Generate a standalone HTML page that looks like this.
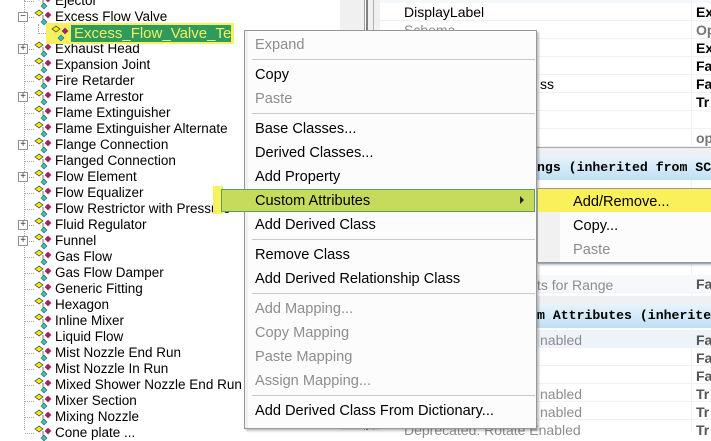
<!DOCTYPE html>
<html><head><meta charset="utf-8"><style>
*{margin:0;padding:0;box-sizing:border-box}
body{width:711px;height:430px;overflow:hidden;position:relative;background:#fff;font-family:"Liberation Sans",sans-serif;font-size:13.5px;color:#000}
.a{position:absolute;white-space:nowrap}
.ti{position:absolute;left:55px;height:16px;line-height:16px;white-space:nowrap}
.ic{position:absolute;left:33px;width:20px;height:16px}
.pb{position:absolute;left:18px;width:10px;height:10px;border:1px solid #919191;background:#fff;font-size:10px;line-height:8px;text-align:center;color:#333}
.mi{position:absolute;left:255px;font-size:14.6px;line-height:18px;white-space:nowrap;margin-top:1px}
.dis{color:#8d8d8d}
.sep{position:absolute;left:252px;width:283px;height:1px;background:#c8c8c8}
.row{position:absolute;left:380px;width:331px;height:18px;border-bottom:1px solid #eef2f8}
.val{position:absolute;left:696px;font-weight:bold;font-size:14px;line-height:18px}
.hdr{position:absolute;left:373px;width:338px;background:linear-gradient(#e8f3fb,#bfe0f5);font-family:"Liberation Mono",monospace;font-weight:bold;font-size:13.2px;white-space:nowrap;overflow:hidden}
</style></head><body>
<div class="a" style="left:24px;top:0;width:0;height:430px;border-left:1px dotted #a0a0a0"></div>
<div class="a" style="left:38px;top:24px;width:0;height:10px;border-left:1px dotted #a0a0a0"></div>
<div id="tree"></div>
<script>
var items=["Ejector","Excess Flow Valve","","Exhaust Head","Expansion Joint","Fire Retarder","Flame Arrestor","Flame Extinguisher","Flame Extinguisher Alternate","Flange Connection","Flanged Connection","Flow Element","Flow Equalizer","Flow Restrictor with Pressure","Fluid Regulator","Funnel","Gas Flow","Gas Flow Damper","Generic Fitting","Hexagon","Inline Mixer","Liquid Flow","Mist Nozzle End Run","Mist Nozzle In Run","Mixed Shower Nozzle End Run","Mixer Section","Mixing Nozzle","Cone plate ..."];
var plus={3:1,6:1,9:1,11:1,14:1,15:1};
var h="";
function icon(x,y){return '<svg class="ic" style="left:'+x+'px;top:'+y+'px" width="20" height="16" viewBox="0 0 20 16"><path d="M6 1l4 3-4 3-4-3z" fill="#f6f000" stroke="#555" stroke-width=".8"/><path d="M15 3l3 3-3 3-3-3z" fill="#c01070" stroke="#555" stroke-width=".6"/><path d="M11 10l3 3-3 3-3-3z" fill="#20c8c8" stroke="#555" stroke-width=".6"/><path d="M10 6v5" stroke="#555" stroke-width=".8"/></svg>';}
for(var i=0;i<items.length;i++){
 var y=-7+i*16;
 if(i==2){continue;}
 h+='<div class="a" style="left:25px;top:'+(y+8)+'px;width:9px;border-top:1px dotted #a0a0a0"></div>';
 h+=icon(33,y);
 h+='<div class="ti" style="top:'+y+'px">'+items[i]+'</div>';
 if(plus[i])h+='<div class="pb" style="top:'+(y+3)+'px">+</div>';
}
h+='<div class="pb" style="top:12px">&minus;</div>';
document.getElementById("tree").innerHTML=h;
</script>
<div class="a" style="left:340px;top:0;width:24px;height:430px;background:#f0f0f0"></div>
<div class="a" style="left:364px;top:0;width:1px;height:430px;background:#a0a0a0"></div>
<div class="a" style="left:366px;top:0;width:2px;height:430px;background:#808080"></div>
<div class="a" style="left:368px;top:0;width:12px;height:430px;background:#f0f0f0"></div>
<div class="a" style="left:373px;top:0;width:1px;height:430px;background:#b0b0b0"></div>
<div class="a" style="left:380px;top:0;width:331px;height:430px;background:#fff"></div>
<div class="a" style="left:380px;top:0;width:331px;height:3px;background:#f4f7fb"></div>
<div class="a" style="left:691px;top:0;width:1px;height:430px;background:#eef2f8"></div>
<div class="row" style="top:3px"></div><div class="a" style="left:404px;top:3px;font-size:14px;line-height:18px">DisplayLabel</div><div class="val" style="top:3px">Ex</div>
<div class="row" style="top:21px"></div><div class="a dis" style="left:404px;top:21px;font-size:14px;line-height:18px">Schema</div><div class="val" style="top:21px;color:#777">Op</div>
<div class="row" style="top:39px"></div><div class="val" style="top:39px">Ex</div>
<div class="row" style="top:57px"></div><div class="val" style="top:57px">Fa</div>
<div class="row" style="top:75px"></div><div class="a" style="left:540px;top:75px;font-size:14px;line-height:18px">ss</div><div class="val" style="top:75px">Fa</div>
<div class="row" style="top:93px"></div><div class="val" style="top:93px">Tr</div>
<div class="row" style="top:111px"></div>
<div class="row" style="top:129px"></div><div class="val" style="top:129px;color:#777">op</div>
<div class="a" style="left:380px;top:147px;width:331px;height:1px;background:#a8a8a8"></div>
<div class="a" style="left:380px;top:148px;width:331px;height:8px;background:#eef0f3"></div>
<div class="hdr" style="top:156px;height:24px;line-height:24px;padding-left:164px">ngs (inherited from SC</div>
<div class="hdr" style="top:238px;height:26px;line-height:26px;padding-left:164px">ment Custom Attribu</div>
<div class="row" style="top:275px;background:#f6f8fc"></div><div class="a dis" style="left:537px;top:275px;font-size:14px;line-height:20px">ts for Range</div><div class="val" style="top:275px;color:#555">Fa</div>
<div class="a" style="left:380px;top:296px;width:331px;height:8px;background:#eef0f3"></div>
<div class="hdr" style="top:304px;height:24px;line-height:24px;padding-left:164px">m Attributes (inherited</div>
<div class="row" style="top:330px;background:#eef3fa"></div><div class="a dis" style="left:540px;top:331px;font-size:14px;line-height:18px">nabled</div><div class="val" style="top:331px;color:#555">Fa</div>
<div class="row" style="top:348px"></div><div class="val" style="top:349px;color:#555">Fa</div>
<div class="row" style="top:366px"></div><div class="val" style="top:367px;color:#555">Fa</div>
<div class="row" style="top:384px"></div><div class="a dis" style="left:540px;top:385px;font-size:14px;line-height:18px">nabled</div><div class="val" style="top:385px;color:#555">Tr</div>
<div class="row" style="top:402px"></div><div class="a dis" style="left:540px;top:403px;font-size:14px;line-height:18px">nabled</div><div class="val" style="top:403px;color:#555">Tr</div>
<div class="a dis" style="left:404px;top:421px;font-size:14px;line-height:18px">Deprecated: Rotate Enabled</div><div class="val" style="top:421px;color:#555">Tr</div>

<div class="a" style="left:38px;top:33px;width:10px;border-top:1px dotted #a0a0a0"></div>
<div class="a" style="left:46px;top:23px;width:188px;height:21px;background:#f7f160"></div>
<svg class="a" style="left:50px;top:25px" width="20" height="16" viewBox="0 0 20 16"><path d="M6 1l4 3-4 3-4-3z" fill="#f6f000" stroke="#555" stroke-width=".8"/><path d="M15 3l3 3-3 3-3-3z" fill="#c01070" stroke="#555" stroke-width=".6"/><path d="M11 10l3 3-3 3-3-3z" fill="#20c8c8" stroke="#555" stroke-width=".6"/></svg>
<div class="a" style="left:71px;top:25px;width:160px;height:17px;background:#2e9a5e;color:#f4f060;font-size:15px;line-height:17px;padding-left:3px;overflow:hidden">Excess_Flow_Valve_Test</div>
<div class="a" style="left:213px;top:186px;width:10px;height:28px;background:#f7f160"></div>
<div class="a" style="left:244px;top:30px;width:293px;height:399px;background:#fcfcfc;border:1px solid #979797;box-shadow:2px 2px 2px rgba(0,0,0,.25)"></div>
<div class="a" style="left:245px;top:31px;width:3px;height:397px;background:#f1f1f1"></div>
<div class="mi dis" style="top:35px">Expand</div>
<div class="sep" style="top:59px"></div>
<div class="mi" style="top:65px">Copy</div>
<div class="mi dis" style="top:89px">Paste</div>
<div class="sep" style="top:113px"></div>
<div class="mi" style="top:119px">Base Classes...</div>
<div class="mi" style="top:143px">Derived Classes...</div>
<div class="mi" style="top:167px">Add Property</div>
<div class="a" style="left:221px;top:189px;width:314px;height:23px;background:#c6da5c;border:1px solid #5aa05a"></div>
<div class="mi" style="top:191px">Custom Attributes</div>
<div class="a" style="left:520px;top:196px;width:0;height:0;border-left:4px solid #222;border-top:4px solid transparent;border-bottom:4px solid transparent"></div>
<div class="mi" style="top:215px">Add Derived Class</div>
<div class="sep" style="top:239px"></div>
<div class="mi" style="top:245px">Remove Class</div>
<div class="mi" style="top:269px">Add Derived Relationship Class</div>
<div class="sep" style="top:293px"></div>
<div class="mi dis" style="top:299px">Add Mapping...</div>
<div class="mi dis" style="top:323px">Copy Mapping</div>
<div class="mi dis" style="top:347px">Paste Mapping</div>
<div class="mi dis" style="top:371px">Assign Mapping...</div>
<div class="sep" style="top:395px"></div>
<div class="mi" style="top:401px">Add Derived Class From Dictionary...</div>
<div class="a" style="left:537px;top:188px;width:174px;height:75px;background:#fcfcfc;border:1px solid #979797;border-right:none;box-shadow:2px 2px 2px rgba(0,0,0,.25)"></div>
<div class="a" style="left:538px;top:189px;width:22px;height:73px;background:#f1f1f1"></div>
<div class="a" style="left:538px;top:189px;width:173px;height:23px;background:#faf05a"></div>
<div class="mi" style="left:573px;top:192px">Add/Remove...</div>
<div class="mi" style="left:573px;top:216px">Copy...</div>
<div class="mi dis" style="left:573px;top:240px">Paste</div>
</body></html>
